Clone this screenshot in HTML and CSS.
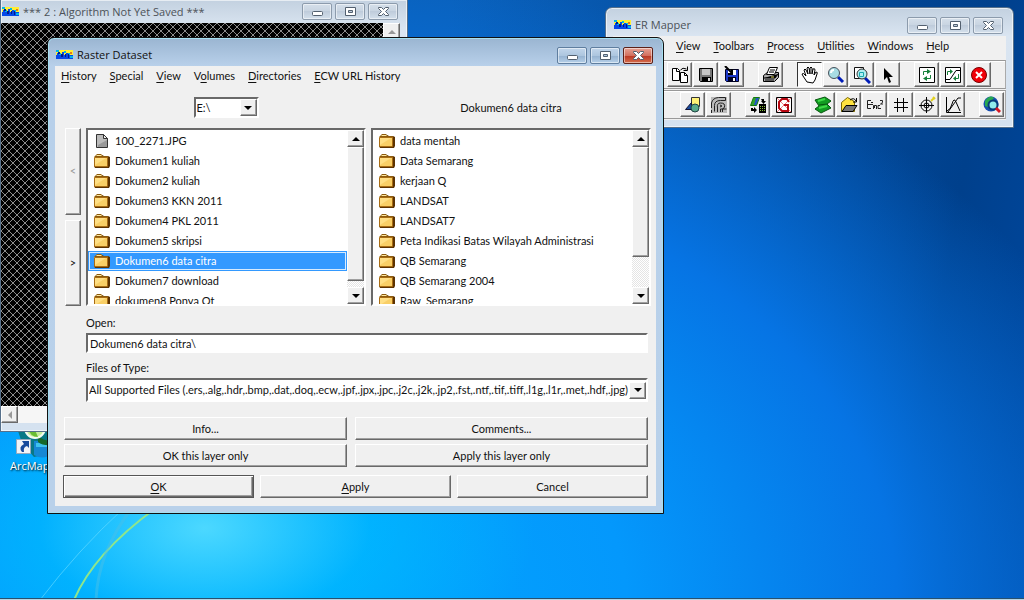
FILE: index.html
```html
<!DOCTYPE html>
<html lang="en">
<head>
    <meta charset="UTF-8">
    <meta name="viewport" content="width=device-width, initial-scale=1.0">
    <title>ER Mapper</title>
    <link rel="stylesheet" href="styles.css">
</head>
<body>

<!-- shared symbols -->
<svg class="defs" aria-hidden="true">
    <symbol id="logo" viewBox="0 0 17 10">
        <path fill="#ffee33" d="M0 0h17v5H0z"/>
        <path fill="#0648e8" d="M0 5h17v4H0zM1 3h3v3H1zM6 2h2v4H6zM10 3h3v3h-3z"/>
        <path fill="#00b8e8" d="M0 0h3v2H0zM3 3h2v2H3zM8 1h2v2H8zM12 3h2v2h-2zM14 6h3v2h-3z"/>
        <path fill="#001c88" d="M2 2h2v2H2zM5 4h2v3H5zM9 4h1v3H9zM12 4h1v4h-1z"/>
        <path fill="#e07820" d="M14 2h2v2h-2z"/>
    </symbol>
    <symbol id="folder" viewBox="0 0 17 14">
        <path fill="#5c3200" d="M2 3l2-2h5l2 1h4l2 1v9l-1 2H2l-1-2z"/>
        <path fill="#8c5a0c" d="M1 3l3-3h4l2 2h5v10H1z"/>
        <path fill="#ffe9a0" d="M4 1h4l1 1H3zM1 3h13v9H1z"/>
        <path fill="#f9cf66" d="M2 4h12v8H2z"/>
        <path fill="#ffdf85" d="M2 4h11L2 11z"/>
        <path fill="none" stroke="#a86c14" d="M1.500 12.500v-9h13v9z"/>
    </symbol>
    <symbol id="min" viewBox="0 0 13 11"><rect x="1.500" y="5.500" width="10" height="4" rx="1" fill="#fff" stroke="#53606f"/></symbol>
    <symbol id="max" viewBox="0 0 13 11"><path fill="#fff" fill-rule="evenodd" stroke="#53606f" d="M1.500 1.500h10v8h-10zM4.500 4.500h4v2h-4z"/></symbol>
    <symbol id="cross" viewBox="0 0 13 11"><path fill="#fff" stroke="#53606f" d="M1.500 1.500h3l2 2 2-2h3v1l-3 3 3 3v1h-3l-2-2-2 2h-3v-1l3-3-3-3z"/></symbol>
    <symbol id="lens" viewBox="0 0 18 18">
        <path stroke="#001cb8" stroke-width="3" d="M11 11l5 5"/>
        <circle cx="7" cy="7" r="5.500" fill="#a8dce4" stroke="#47525c"/>
        <path fill="none" stroke="#fff" stroke-width="2" d="M4 7q0-3 3-3"/>
    </symbol>
</svg>

<div class="desktop">
    <svg class="wallpaper" viewBox="0 0 1024 600" preserveAspectRatio="none" aria-hidden="true">
        <path d="M40 600Q78 550 124 508" stroke="#5fd8ff" opacity=".7"/>
        <path d="M74 600Q94 553 156 508" stroke="#8ee68c" stroke-width="2"/>
        <path d="M96 600Q98 552 132 508" stroke="#48c0e8" opacity=".5" stroke-width="3"/>
    </svg>

    <a class="shortcut" href="#">
        <svg width="36" height="34" viewBox="0 0 36 34" aria-hidden="true">
            <path fill="#087886" d="M2 6Q4 0 12 0h20l4 8v20l-18 4L6 18z"/>
            <path fill="#1688d4" d="M18 16h18v12q-8 8-18 2z"/>
            <path fill="#3fc3ee" d="M20 18h14v4H20z"/>
            <path fill="#15692b" d="M22 11q8 6 14 4v5q-9 1-14-3z"/>
            <circle cx="19" cy="3" r="10" fill="#c5ed9b" stroke="#f3fbef" stroke-width="2"/>
            <path fill="#68bd32" d="M12 3l7 2 3 7q-8 0-10-9z"/>
            <path fill="#f0f4f8" stroke="#98aabd" d="M.5 14.500h14v14H.5z"/>
            <path fill="#174b9c" d="M6 16h7v7l-2-2q-4 1-3 6H6q-4-5 2-8z"/>
        </svg>
        <span>ArcMap</span>
    </a>

    <!-- algorithm window -->
    <section class="window algorithm">
        <header class="titlebar">
            <svg class="logo"><use href="#logo"/></svg>
            <h2>*** 2 : Algorithm Not Yet Saved ***</h2>
            <button class="caption" aria-label="Minimize"><svg><use href="#min"/></svg></button>
            <button class="caption" aria-label="Maximize"><svg><use href="#max"/></svg></button>
            <button class="caption" aria-label="Close"><svg><use href="#cross"/></svg></button>
        </header>
        <div class="canvas">
            <svg class="hatch" aria-hidden="true">
                <pattern id="cross-hatch" width="8" height="8" patternUnits="userSpaceOnUse">
                    <path d="M-1-1l10 10M9-1L-1 9" stroke="#8c8c8c"/>
                </pattern>
                <rect width="100%" height="100%" fill="url(#cross-hatch)"/>
            </svg>
            <div class="scrollbar"><button class="arrow up off" aria-label="Scroll up"></button></div>
        </div>
        <div class="scrollbar-h"><button class="arrow left off" aria-label="Scroll left"></button></div>
    </section>

    <!-- main toolbar window -->
    <section class="window mapper">
        <header class="titlebar">
            <svg class="logo"><use href="#logo"/></svg>
            <h2>ER Mapper</h2>
            <button class="caption" aria-label="Minimize"><svg><use href="#min"/></svg></button>
            <button class="caption" aria-label="Maximize"><svg><use href="#max"/></svg></button>
            <button class="caption" aria-label="Close"><svg><use href="#cross"/></svg></button>
        </header>
        <div class="client">
            <nav class="menu">
                <button><u>V</u>iew</button>
                <button><u>T</u>oolbars</button>
                <button><u>P</u>rocess</button>
                <button><u>U</u>tilities</button>
                <button><u>W</u>indows</button>
                <button><u>H</u>elp</button>
            </nav>
            <div class="toolbar file-tools">
                <div class="group">
                    <button aria-label="Copy window"><svg viewBox="0 0 18 18"><path fill="#fff" stroke="#000" d="M1.500 2.500h5l2 2v10h-7zM9.500 6.500h4l3 3v7h-7z"/><path fill="none" stroke="#000" d="M5.500 2.500v3h3M13.500 6.500v3h3M9.500 4q2-3 6-1M12.500 4.500h4v-4"/></svg></button>
                    <button aria-label="Save"><svg viewBox="0 0 18 18"><path fill="#777" stroke="#000" d="M2.500 2.500h13v13h-12l-1-1z"/><path fill="#c4c4c4" d="M5 3h8v6H5z"/><path d="M5 11h9v4H5z"/><path fill="#ddd" d="M11 12h2v3h-2z"/></svg></button>
                    <button aria-label="Save as"><svg viewBox="0 0 18 18"><path fill="#1c38c8" stroke="#002" d="M2.500 3.500h13v12h-12l-1-1z"/><path fill="#fff" d="M5 4h8v5H5z"/><path fill="#002" d="M5 11h8v4H5z"/><path fill="#fff" d="M10 12h2v3h-2z"/><path fill="none" stroke="#000" stroke-width="2" d="M2 0l7 7M9 3v5H5"/></svg></button>
                </div>
                <div class="group">
                    <button aria-label="Print"><svg viewBox="0 0 18 18"><path fill="#aaa" stroke="#000" d="M1.500 9.500l4-3h11v5l-4 4h-11z"/><path fill="#fff" stroke="#000" d="M4.500 8.500l3-7h8l-3 7z"/><path stroke="#000" d="M8 4h5M7 6h5M2 12h11l3-4M3 14h9"/><path stroke="#e7df5a" d="M9 11h3"/></svg></button>
                </div>
                <div class="group">
                    <button class="pressed" aria-label="Pan"><svg viewBox="0 0 18 18"><path fill="#fff" stroke="#000" d="M6 16l-4-6-1-2q1-2 4 2L3 4q1-2 2 0l2 4-1-6q1-2 2 0l1 6V2q1-2 2 0v6l1-5q2-1 2 1l-1 5 2-3q2 0 1 2l-2 6-2 3z"/></svg></button>
                    <button aria-label="Zoom"><svg><use href="#lens"/></svg></button>
                    <button aria-label="Zoom box"><svg viewBox="0 0 18 18"><path fill="#fff" stroke="#111" d="M1.500 1.500h9v11h-9z"/><path stroke="#001cb8" stroke-width="3" d="M12 12l5 5"/><circle cx="9" cy="8" r="5" fill="#b0eef0" stroke="#333"/><path fill="none" stroke="#18a9b0" d="M6.500 6.500h4v4h-4z"/></svg></button>
                    <button aria-label="Pointer"><svg viewBox="0 0 18 18"><path d="M5 2v12l3-3 2 6 2-1-2-5h4z"/></svg></button>
                </div>
                <div class="group">
                    <button aria-label="Refresh"><svg viewBox="0 0 18 18"><path fill="#fff" stroke="#000" d="M1.500 1.500h15v15h-15z"/><path fill="none" stroke="#16813a" d="M5.500 9V5.500h4M12.500 9v3.500h-4"/><path fill="#16813a" d="M9 3l4 2.500L9 8zM9 10l-4 2.500L9 15z"/></svg></button>
                    <button aria-label="Refresh with clip"><svg viewBox="0 0 18 18"><path fill="#fff" stroke="#000" d="M1.500 1.500h15v15h-15z"/><path fill="none" stroke="#000" d="M2 13.500h4l6-9h4"/><path fill="none" stroke="#16813a" d="M3.500 9V5.500h4M14.500 8v4.500h-4"/><path fill="#16813a" d="M6 3l3 2.500L6 8zM12 10l-3 2.500 3 2.500z"/></svg></button>
                    <button aria-label="Stop"><svg viewBox="0 0 18 18"><circle cx="9" cy="9" r="7.500" fill="#f00008" stroke="#700"/><path stroke="#fff" stroke-width="2" d="M6 6l6 6M12 6l-6 6"/></svg></button>
                </div>
            </div>
            <div class="toolbar process-tools">
                <div class="group">
                    <button aria-label="Annotation"><svg viewBox="0 0 18 18"><path fill="#fff176" stroke="#333" d="M7.500 1.500h8v9h-8z"/><path fill="#174b9b" stroke="#113" d="M1.500 13.500l6-7v7z"/><circle cx="11" cy="12" r="4" fill="#5aaa8b" stroke="#244"/></svg></button>
                    <button aria-label="Contours"><svg viewBox="0 0 18 18"><path fill="#bbb" d="M1 1h16v16H1z"/><path fill="none" stroke="#222" d="M1.500 12V7q1-5 7-5.500h7v3h-5q-6 0-6 5v6M7.500 16v-4q-1-5 3-5 5 0 4 4-1 3-4 2v3M10 9l2 1-2 1M12.500 16v-3h4M1.500 14v3"/></svg></button>
                </div>
                <div class="group">
                    <button aria-label="Geocode"><svg viewBox="0 0 18 18"><path fill="#35a329" stroke="#171" d="M4.500 1.500h6l-3 8h-6z"/><path fill="#2355c5" d="M7 2h3L7 9H5z"/><path d="M10 8h7v9h-7z"/><path stroke="#85bd3c" stroke-dasharray="1 1" d="M11 10.500h5M11 12.500h5M11 14.500h5"/><path d="M12 3h3v2h2l-2.500 3L12 5h1zM2 12h2v1h1v-2l3 3-3 3v-2H2z"/></svg></button>
                    <button aria-label="Gridding"><svg viewBox="0 0 18 18"><path fill="#fff" stroke="#000" d="M1.500 1.500h15v15h-15z"/><path stroke="#f08088" d="M2 2l14 14M16 2L2 16"/><path fill="none" stroke="#b80812" stroke-width="2" d="M14 6l-2-3H7L4 6v6l3 3h6V9H9"/></svg></button>
                </div>
                <div class="group">
                    <button aria-label="Layers"><svg viewBox="0 0 18 18"><path fill="#129c22" stroke="#07570f" d="M1 4l10-3 6 4-4 3 4 4-10 5-6-4 4-3z"/><path stroke="#40db48" stroke-width="2" d="M4 5l7-2M5 12l8-2"/><path stroke="#07570f" d="M5 9l8-1"/></svg></button>
                    <button aria-label="Open algorithm"><svg viewBox="0 0 18 18"><path fill="#ffe340" stroke="#7b6800" d="M1.500 6.500l6-5 7 4v10h-13z"/><path fill="#777" stroke="#000" d="M2 15.500l4-6h11l-4 6z"/><path fill="none" stroke="#000" d="M10 4q4-3 6 1M16.500 2v4H13"/></svg></button>
                    <button aria-label="Formula"><svg viewBox="0 0 18 18"><path fill="none" stroke="#222" d="M5 4.500H1.500v8H5M2 8.500h3M5 6.500h2M5 8.500h2M7.500 13V9.500h1V12M8.500 9.500h2V13M14 9.500h-2v3h3M14 4.500h2.500v2l-2 1.500H17"/></svg></button>
                    <button aria-label="Grid"><svg viewBox="0 0 18 18"><path stroke="#000" d="M5.500 2v14M11.500 2v14M2 6.500h14M2 11.500h14"/></svg></button>
                    <button aria-label="Target"><svg viewBox="0 0 18 18"><path fill="none" stroke="#000" d="M8.500 1v16M1 9.500h15"/><circle cx="8.500" cy="9.500" r="5.500" fill="none" stroke="#000"/><circle cx="8.500" cy="9.500" r="2.500" fill="none" stroke="#000"/><path stroke="#e2d11c" stroke-width="2" d="M13 5l3-3M15 1l2 2"/></svg></button>
                    <button aria-label="Transform"><svg viewBox="0 0 18 18"><path fill="none" stroke="#000" d="M2.500 1v15.500H17M3 15q4-2 5-7 2-7 4-2l4 9M4 16L14 2h3"/></svg></button>
                </div>
                <div class="group">
                    <button aria-label="Web search"><svg viewBox="0 0 18 18"><circle cx="8" cy="8" r="7.500" fill="#174db0"/><path fill="#27a850" d="M2 5q5-7 9-3l-3 4-3 5-3-1z"/><circle cx="10" cy="9" r="4.500" fill="#91ecec" stroke="#063b78" stroke-width="2"/><path stroke="#d51824" stroke-width="3" d="M13 12l4 4"/></svg></button>
                </div>
            </div>
        </div>
    </section>

    <!-- open dialog -->
    <section class="window dialog">
        <header class="titlebar">
            <svg class="logo"><use href="#logo"/></svg>
            <h2>Raster Dataset</h2>
            <button class="caption" aria-label="Minimize"><svg><use href="#min"/></svg></button>
            <button class="caption" aria-label="Maximize"><svg><use href="#max"/></svg></button>
            <button class="caption close" aria-label="Close"><svg><use href="#cross"/></svg></button>
        </header>
        <div class="client">
            <nav class="menu">
                <button><u>H</u>istory</button>
                <button><u>S</u>pecial</button>
                <button><u>V</u>iew</button>
                <button>V<u>o</u>lumes</button>
                <button><u>D</u>irectories</button>
                <button><u>E</u>CW URL History</button>
            </nav>

            <div class="browser">
                <div class="drive combo">
                    <select aria-label="Drive"><option>E:\</option></select>
                    <span class="arrow down"></span>
                </div>
                <div class="location">Dokumen6 data citra</div>

                <div class="pager">
                    <button disabled>&lt;</button>
                    <button>&gt;</button>
                </div>
                <div class="list">
                    <ul>
                        <li><svg viewBox="0 0 17 14"><path fill="#bbb" stroke="#333" d="M3.500.5h7l4 4v9h-11z"/><path fill="#eee" stroke="#333" d="M10.500.5v4h4z"/><path fill="#999" d="M5 11l9-5v7H5z"/></svg>100_2271.JPG</li>
                        <li><svg><use href="#folder"/></svg>Dokumen1 kuliah</li>
                        <li><svg><use href="#folder"/></svg>Dokumen2 kuliah</li>
                        <li><svg><use href="#folder"/></svg>Dokumen3 KKN 2011</li>
                        <li><svg><use href="#folder"/></svg>Dokumen4 PKL 2011</li>
                        <li><svg><use href="#folder"/></svg>Dokumen5 skripsi</li>
                        <li class="selected"><svg><use href="#folder"/></svg>Dokumen6 data citra</li>
                        <li><svg><use href="#folder"/></svg>Dokumen7 download</li>
                        <li><svg><use href="#folder"/></svg>dokumen8 Ponya Qt</li>
                    </ul>
                    <div class="scrollbar">
                        <button class="arrow up" aria-label="Scroll up"></button>
                        <div class="thumb long"></div>
                        <button class="arrow down" aria-label="Scroll down"></button>
                    </div>
                </div>
                <div class="list">
                    <ul>
                        <li><svg><use href="#folder"/></svg>data mentah</li>
                        <li><svg><use href="#folder"/></svg>Data Semarang</li>
                        <li><svg><use href="#folder"/></svg>kerjaan Q</li>
                        <li><svg><use href="#folder"/></svg>LANDSAT</li>
                        <li><svg><use href="#folder"/></svg>LANDSAT7</li>
                        <li><svg><use href="#folder"/></svg>Peta Indikasi Batas Wilayah Administrasi</li>
                        <li><svg><use href="#folder"/></svg>QB Semarang</li>
                        <li><svg><use href="#folder"/></svg>QB Semarang 2004</li>
                        <li><svg><use href="#folder"/></svg>Raw_Semarang</li>
                    </ul>
                    <div class="scrollbar">
                        <button class="arrow up" aria-label="Scroll up"></button>
                        <div class="thumb short"></div>
                        <button class="arrow down" aria-label="Scroll down"></button>
                    </div>
                </div>
            </div>

            <div class="fields">
                <label for="open">Open:</label>
                <input type="text" id="open" value="Dokumen6 data citra\">
                <label for="types">Files of Type:</label>
                <div class="combo">
                    <select id="types"><option>All Supported Files (.ers,.alg,.hdr,.bmp,.dat,.doq,.ecw,.jpf,.jpx,.jpc,.j2c,.j2k,.jp2,.fst,.ntf,.tif,.tiff,.l1g,.l1r,.met,.hdf,.jpg)</option></select>
                    <span class="arrow down"></span>
                </div>
            </div>

            <div class="layer-actions">
                <button class="btn">Info...</button>
                <button class="btn">Comments...</button>
                <button class="btn">OK this layer only</button>
                <button class="btn">Apply this layer only</button>
            </div>
            <div class="main-actions">
                <button class="btn default"><u>O</u>K</button>
                <button class="btn"><u>A</u>pply</button>
                <button class="btn">Cancel</button>
            </div>
        </div>
    </section>

    <div class="taskbar"></div>
</div>

</body>
</html>
```
FILE: styles.css
```css
* {
    box-sizing: border-box;
}
body {
    margin: 0;
    font-family: Lato, "Liberation Sans", sans-serif;
    font-size: 11px;
    line-height: 14px;
    color: #111;
}
button, input, select {
    font: inherit;
    color: inherit;
    padding: 0;
    margin: 0;
}
u {
    text-underline-offset: 2px;
}
.defs {
    position: absolute;
    width: 0;
    height: 0;
}
.desktop {
    position: relative;
    min-height: 100vh;
    overflow: hidden;
    background:
        radial-gradient(ellipse 330px 190px at 20% 88%, rgba(84, 222, 255, 0.9), rgba(0, 190, 255, 0.6) 50%, transparent),
        radial-gradient(ellipse 900px 640px at 26% 100%, #00a8ff, #0498fc 40%, #0674e4 70%, transparent),
        linear-gradient(100deg, #0a60ba 40%, #00408c 88%, #0048a0);
}
.wallpaper {
    position: absolute;
    width: 100%;
    height: 100%;
    fill: none;
}
.shortcut {
    position: absolute;
    left: 10px;
    top: 425px;
    color: #fff;
    font-family: "Open Sans", sans-serif;
    font-size: 11px;
    text-decoration: none;
    text-shadow: 1px 1px 2px #000;
}
.shortcut svg {
    display: block;
    margin-left: 6px;
}

/* windows */
.window {
    position: absolute;
    padding: 0 7px 7px;
    border: 1px solid #56708b;
    border-radius: 7px 7px 0 0;
    background: linear-gradient(#c3d1e0, #dae5f1 28px, #d5e2f0);
    box-shadow: inset 0 0 0 1px rgba(255, 255, 255, 0.6);
}
.titlebar {
    display: flex;
    align-items: center;
    gap: 3px;
    height: 28px;
    padding: 6px 3px 0 1px;
}
.titlebar h2 {
    flex: 1;
    margin: 0;
    padding-left: 1px;
    font-family: "Open Sans", sans-serif;
    font-size: 11px;
    font-weight: normal;
    color: #4c5258;
}
.logo {
    width: 17px;
    height: 10px;
}
.caption {
    display: flex;
    align-items: center;
    justify-content: center;
    width: 30px;
    height: 17px;
    border: 1px solid #8c9bac;
    border-radius: 2px;
    background: linear-gradient(#d5dfea, #c8d4e1 50%, #bfccdb 50%, #d4e0ec);
    box-shadow: inset 0 0 0 1px rgba(255, 255, 255, 0.5);
}
.caption svg {
    width: 13px;
    height: 11px;
}
.client {
    background: #f0f0f0;
}
.menu {
    display: flex;
    gap: 13px;
}
.menu button {
    border: none;
    background: none;
}

/* algorithm window */
.algorithm {
    left: 0;
    top: 0;
    width: 408px;
    padding: 0 7px 8px 0;
    border-top: none;
    border-radius: 0;
}
.algorithm .titlebar {
    height: 23px;
    padding-top: 0;
    padding-right: 2px;
}
.canvas {
    display: flex;
    height: 383px;
    background: #000;
}
.hatch {
    flex: 1;
    height: 100%;
}
.scrollbar-h {
    background: #f6f6f6;
}

/* scrollbars */
.scrollbar {
    display: flex;
    flex-direction: column;
    width: 17px;
    background: repeating-conic-gradient(#fff 0 25%, #e4e4e4 0 50%) 0 0 / 2px 2px;
}
.arrow {
    display: flex;
    align-items: center;
    justify-content: center;
    flex: none;
    width: 17px;
    height: 17px;
    border: 1px solid;
    border-color: #fff #696969 #696969 #fff;
    background: #f0f0f0;
    box-shadow: inset -1px -1px #a0a0a0;
}
.arrow::before {
    content: "";
    border: 4px solid transparent;
}
.arrow.down::before {
    border-top-color: #000;
    border-bottom: none;
}
.arrow.up::before {
    border-bottom-color: #000;
    border-top: none;
}
.arrow.off.up::before {
    border-bottom-color: #999;
}
.arrow.left::before {
    border-right-color: #999;
    border-left: none;
}
.thumb {
    border: 1px solid;
    border-color: #fff #696969 #696969 #fff;
    background: #f0f0f0;
    box-shadow: inset -1px -1px #a0a0a0;
}
.thumb.long {
    height: 134px;
}
.thumb.short {
    height: 110px;
}
.scrollbar .arrow:last-child:not(:first-child) {
    margin-top: auto;
}

/* toolbars */
.mapper {
    left: 605px;
    top: 7px;
    width: 409px;
}
.mapper .client {
    padding-bottom: 1px;
}
.mapper .menu {
    padding: 3px 0 7px 63px;
}
.toolbar {
    display: flex;
    gap: 14px;
    padding: 1px 0;
    border-top: 1px solid #999;
    border-bottom: 1px solid #999;
    border-right: 1px solid #aaa;
    box-shadow: inset 0 1px #fff;
}
.toolbar + .toolbar {
    margin-top: 1px;
}
.file-tools {
    padding-left: 54px;
}
.process-tools {
    padding-left: 67px;
}
.group {
    display: flex;
    gap: 1px;
}
.group button {
    display: flex;
    align-items: center;
    justify-content: center;
    width: 25px;
    height: 25px;
    border: 1px solid;
    border-color: #fff #696969 #696969 #fff;
    background: #f0f0f0;
    box-shadow: inset -1px -1px #a0a0a0;
}
.group svg {
    flex: none;
    width: 18px;
    height: 18px;
}
.group .pressed {
    border-color: #333 #fff #fff #333;
    background: #fafafa;
    box-shadow: none;
}

/* raster dataset dialog */
.dialog {
    left: 47px;
    top: 37px;
    width: 617px;
    border-color: #111;
    background: linear-gradient(#9ab5d1, #b8d0ea 28px, #b9d1ea);
    box-shadow: inset 0 0 0 1px #a5dff0;
}
.dialog .titlebar h2 {
    color: #111;
}
.dialog .caption {
    border-color: #5f7e9f;
    background: linear-gradient(#c2d6eb, #adc6df 50%, #94b1cf 50%, #b6d0e9);
}
.dialog .close {
    border-color: #5c2018;
    background: linear-gradient(#e5a396, #d3705f 50%, #b93422 50%, #d56d4c);
}
.dialog .client {
    padding-bottom: 8px;
}
.dialog .menu {
    padding: 3px 6px;
}
.browser {
    display: grid;
    grid-template-columns: 16px minmax(0, 1fr) minmax(0, 1fr);
    gap: 10px 5px;
    padding: 11px 5px 0 10px;
}
.combo {
    display: flex;
    align-items: center;
    border: 2px solid;
    border-color: #696969 #fff #fff #696969;
    background: #fff;
}
.combo select {
    appearance: none;
    flex: 1;
    min-width: 0;
    padding-left: 1px;
    border: none;
    background: none;
}
.drive {
    grid-column: 2;
    justify-self: center;
    width: 65px;
    height: 21px;
}
.location {
    align-self: center;
    text-align: center;
}
.pager {
    display: flex;
    flex-direction: column;
    gap: 5px;
}
.pager button {
    flex: 1;
    border: 1px solid;
    border-color: #fff #696969 #696969 #fff;
    background: #f0f0f0;
    box-shadow: inset -1px -1px #a0a0a0;
}
.pager button:disabled {
    color: #999;
}
.list {
    display: flex;
    height: 178px;
    border: 2px solid;
    border-color: #696969 #fff #fff #696969;
    background: #fff;
}
.list ul {
    flex: 1;
    margin: 0;
    padding: 1px 0 0;
    overflow: hidden;
    list-style: none;
}
.list li {
    display: flex;
    align-items: center;
    gap: 5px;
    height: 20px;
    padding-left: 5px;
    white-space: nowrap;
}
.list li svg {
    width: 17px;
    height: 14px;
}
.list .selected {
    border: 1px solid #3399ff;
    padding-left: 4px;
    background: #3399ff;
    box-shadow: inset 0 0 0 1px #d7ebff;
    color: #fff;
}
.fields {
    display: flex;
    flex-direction: column;
    gap: 3px;
    padding: 10px 8px 0 31px;
}
.fields input {
    height: 20px;
    margin-bottom: 5px;
    padding: 0 2px;
    border: 2px solid;
    border-color: #696969 #fff #fff #696969;
    background: #fff;
}
.fields .combo {
    height: 24px;
}
.layer-actions {
    display: grid;
    grid-template-columns: 283fr 293fr;
    gap: 4px 8px;
    padding: 15px 8px 8px 9px;
}
.main-actions {
    display: grid;
    grid-template-columns: 1fr 1fr 1fr;
    gap: 6px;
    padding: 0 8px;
}
.btn {
    height: 23px;
    border: 1px solid;
    border-color: #fff #696969 #696969 #fff;
    background: #f0f0f0;
    box-shadow: inset -1px -1px #a0a0a0;
}
.btn.default {
    border-color: #555;
    box-shadow: inset 1px 1px #fff, inset -1px -1px #696969, inset -2px -2px #a0a0a0;
}
.taskbar {
    position: absolute;
    left: 0;
    right: 0;
    bottom: 0;
    height: 2px;
    border-top: 1px solid #28506e;
    background: #b4d4e4;
}
```
